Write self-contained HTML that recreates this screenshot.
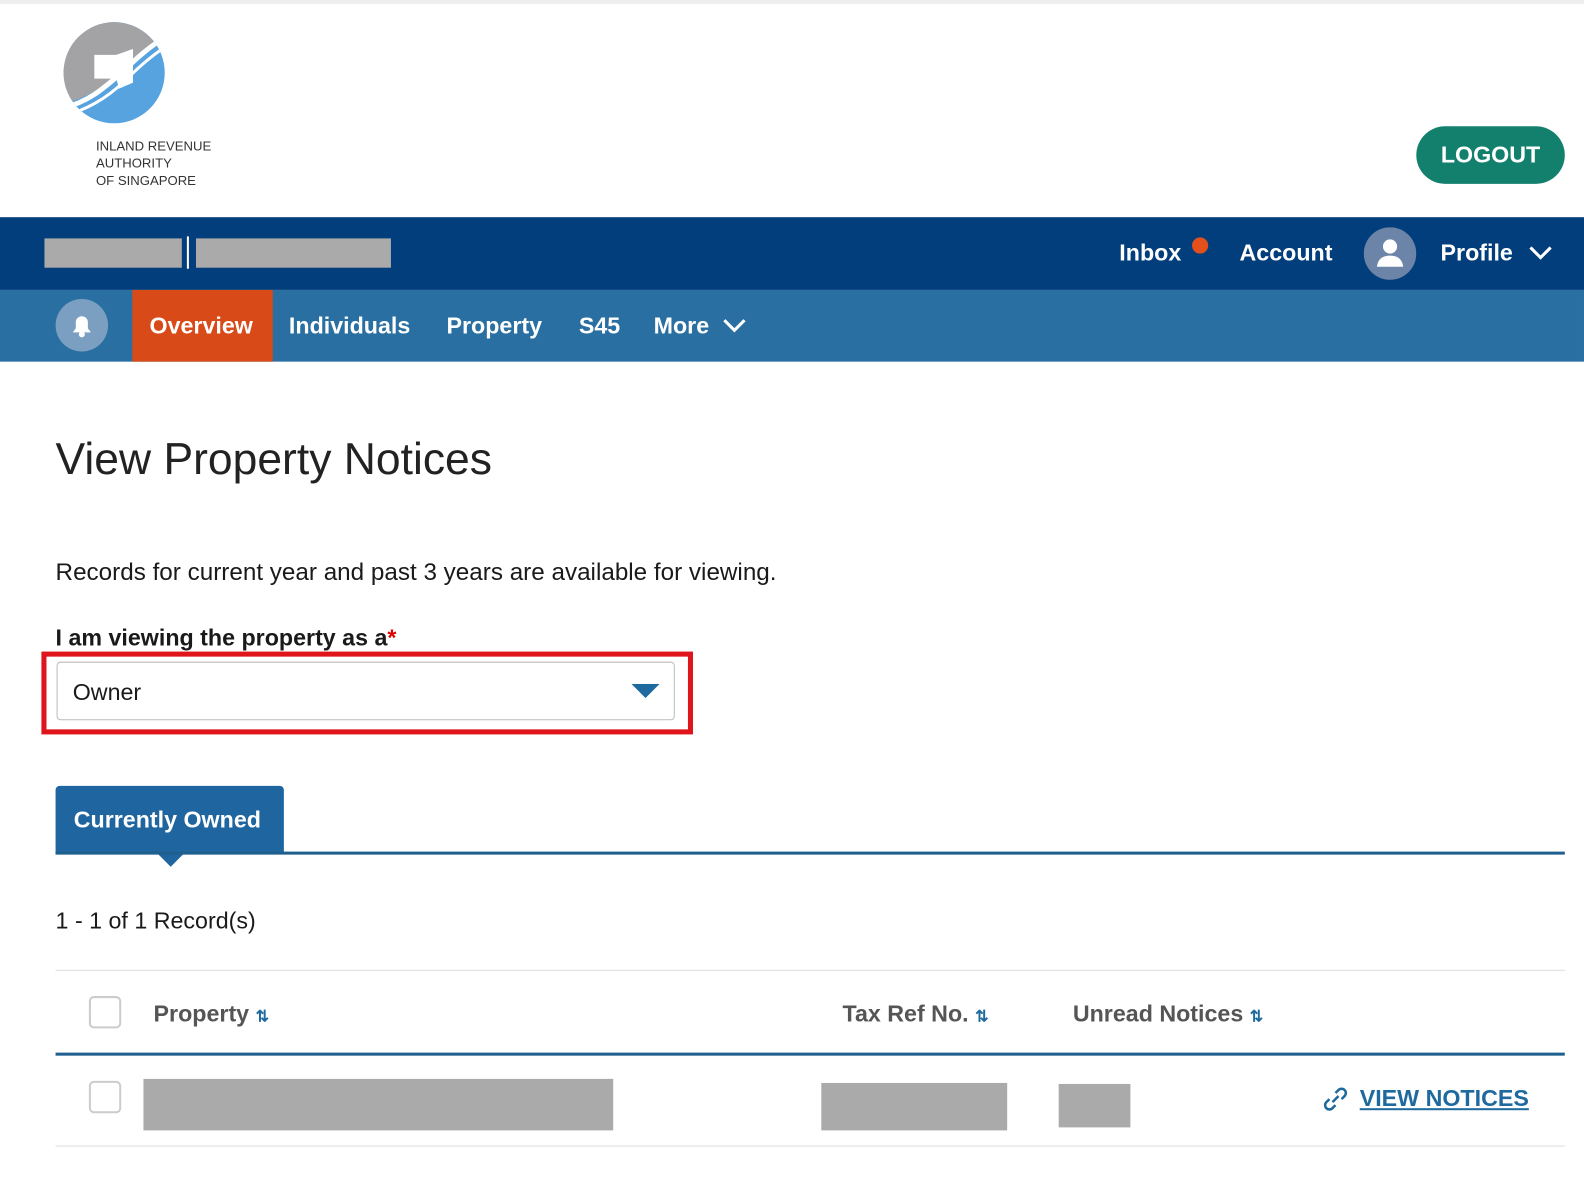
<!DOCTYPE html>
<html><head><meta charset="utf-8"><style>
*{margin:0;padding:0;box-sizing:border-box}
body{width:1584px;height:1200px;background:#fff;font-family:"Liberation Sans",sans-serif;position:relative;overflow:hidden;color:#1a1a1a}
#w{position:absolute;left:0;top:0;width:1568px;height:1188px;transform:scale(1.0102);transform-origin:0 0}
.a{position:absolute}
.b{font-weight:bold}
</style></head><body><div id="w">
<div class="a" style="left:0;top:0;width:1568px;height:4px;background:#eee"></div>
<svg class="a" style="left:61px;top:20px" width="106" height="104" viewBox="0 0 108 104">
<defs><clipPath id="c"><circle cx="53" cy="52" r="51"/></clipPath></defs>
<g clip-path="url(#c)">
<rect width="108" height="104" fill="#56a3e0"/>
<path d="M0 0H108V10C90 22 75 35 60 50 45 64 30 76 0 84Z" fill="#a3a3a5"/>
<path d="M0 88C25 82 40 70 58 54 75 38 90 24 108 14" stroke="#fff" stroke-width="5" fill="none"/>
<path d="M0 96C25 90 45 78 64 60 80 44 94 32 108 24" stroke="#fff" stroke-width="3" fill="none"/>
<path d="M33 34H55L72 28V62L58 68 55 58H33Z" fill="#fff"/>
</g></svg>
<div class="a" style="left:95px;top:136px;font-size:13px;line-height:17px;color:#333">INLAND REVENUE<br>AUTHORITY<br>OF SINGAPORE</div>
<div class="a b" style="left:1402px;top:125px;width:147px;height:57px;border-radius:29px;background:#13806e;color:#fff;font-size:23px;line-height:57px;text-align:center">LOGOUT</div>
<div class="a" style="left:0;top:215px;width:1568px;height:72px;background:#023e7b"></div>
<div class="a" style="left:44px;top:236px;width:136px;height:29px;background:#aaa"></div>
<div class="a" style="left:194px;top:236px;width:193px;height:29px;background:#aaa"></div>
<div class="a" style="left:185px;top:234px;width:2px;height:32px;background:#fff"></div>
<div class="a b" style="left:1108px;top:237px;color:#fff;font-size:23px">Inbox</div>
<div class="a" style="left:1180px;top:235px;width:16px;height:16px;border-radius:50%;background:#e4501c"></div>
<div class="a b" style="left:1227px;top:237px;color:#fff;font-size:23px">Account</div>
<svg class="a" style="left:1350px;top:225px" width="52" height="52"><circle cx="26" cy="26" r="26" fill="#6b84a8"/><circle cx="26" cy="19" r="7" fill="#fff"/><path d="M13 39C14 31 19 28 26 28S38 31 39 39Z" fill="#fff"/></svg>
<div class="a b" style="left:1426px;top:237px;color:#fff;font-size:23px">Profile</div>
<svg class="a" style="left:1513px;top:242px" width="24" height="16"><path d="M2 3L12 13 22 3" stroke="#fff" stroke-width="3" fill="none"/></svg>
<div class="a" style="left:0;top:287px;width:1568px;height:71px;background:#2a6fa1"></div>
<svg class="a" style="left:55px;top:296px" width="52" height="52"><circle cx="26" cy="26" r="26" fill="#7a9fc1"/><path d="M17 33H35L32 29V23A6 6 0 0 0 20 23V29Z" fill="#fff"/><circle cx="26" cy="35" r="3" fill="#fff"/></svg>
<div class="a" style="left:131px;top:287px;width:139px;height:71px;background:#d84a17"></div>
<div class="a b" style="left:148px;top:309px;color:#fff;font-size:23px">Overview</div>
<div class="a b" style="left:286px;top:309px;color:#fff;font-size:23px">Individuals</div>
<div class="a b" style="left:442px;top:309px;color:#fff;font-size:23px">Property</div>
<div class="a b" style="left:573px;top:309px;color:#fff;font-size:23px">S45</div>
<div class="a b" style="left:647px;top:309px;color:#fff;font-size:23px">More</div>
<svg class="a" style="left:715px;top:314px" width="24" height="16"><path d="M2 3L12 13 22 3" stroke="#fff" stroke-width="3" fill="none"/></svg>
<div class="a" style="left:55px;top:430px;font-size:44px;color:#222">View Property Notices</div>
<div class="a" style="left:55px;top:553px;font-size:24px">Records for current year and past 3 years are available for viewing.</div>
<div class="a b" style="left:55px;top:618px;font-size:23px">I am viewing the property as a<span style="color:#d00">*</span></div>
<div class="a" style="left:41px;top:645px;width:645px;height:82px;border:5px solid #e0141b"></div>
<div class="a" style="left:56px;top:655px;width:612px;height:58px;border:1px solid #bbb;border-radius:4px"></div>
<div class="a" style="left:72px;top:672px;font-size:23px">Owner</div>
<svg class="a" style="left:625px;top:677px" width="28" height="14"><path d="M0 0H28L14 14Z" fill="#1e6a9e"/></svg>
<div class="a" style="left:55px;top:778px;width:226px;height:67px;background:#1f65a0;border-radius:4px 4px 0 0"></div>
<div class="a b" style="left:73px;top:798px;color:#fff;font-size:23px">Currently Owned</div>
<svg class="a" style="left:155px;top:844px" width="28" height="14"><path d="M0 0H28L14 14Z" fill="#1f65a0"/></svg>
<div class="a" style="left:55px;top:843px;width:1494px;height:3px;background:#1f5f8e"></div>
<div class="a" style="left:55px;top:898px;font-size:23px">1 - 1 of 1 Record(s)</div>
<div class="a" style="left:55px;top:960px;width:1494px;height:1px;background:#ddd"></div>
<div class="a" style="left:88px;top:986px;width:32px;height:32px;border:2px solid #ccc;border-radius:5px"></div>
<div class="a b" style="left:152px;top:990px;font-size:23px;color:#555">Property <span style="font-size:16px;color:#1e6a9e">⇅</span></div>
<div class="a b" style="left:834px;top:990px;font-size:23px;color:#555">Tax Ref No. <span style="font-size:16px;color:#1e6a9e">⇅</span></div>
<div class="a b" style="left:1062px;top:990px;font-size:23px;color:#555">Unread Notices <span style="font-size:16px;color:#1e6a9e">⇅</span></div>
<div class="a" style="left:55px;top:1042px;width:1494px;height:3px;background:#1f5f8e"></div>
<div class="a" style="left:88px;top:1070px;width:32px;height:32px;border:2px solid #ccc;border-radius:5px"></div>
<div class="a" style="left:142px;top:1068px;width:465px;height:51px;background:#aaa"></div>
<div class="a" style="left:813px;top:1072px;width:184px;height:47px;background:#aaa"></div>
<div class="a" style="left:1048px;top:1073px;width:71px;height:43px;background:#aaa"></div>
<svg class="a" style="left:1308px;top:1074px" width="28" height="28"><g stroke="#1e6a9e" stroke-width="2.5" fill="none"><path d="M11 17L17 11"/><path d="M14 8L17 5A4 4 0 0 1 23 11L20 14"/><path d="M8 14L5 17A4 4 0 0 0 11 23L14 20"/></g></svg>
<div class="a b" style="left:1346px;top:1074px;font-size:23px;color:#1e6a9e;text-decoration:underline">VIEW NOTICES</div>
<div class="a" style="left:55px;top:1134px;width:1494px;height:1px;background:#ddd"></div>
</div></body></html>
